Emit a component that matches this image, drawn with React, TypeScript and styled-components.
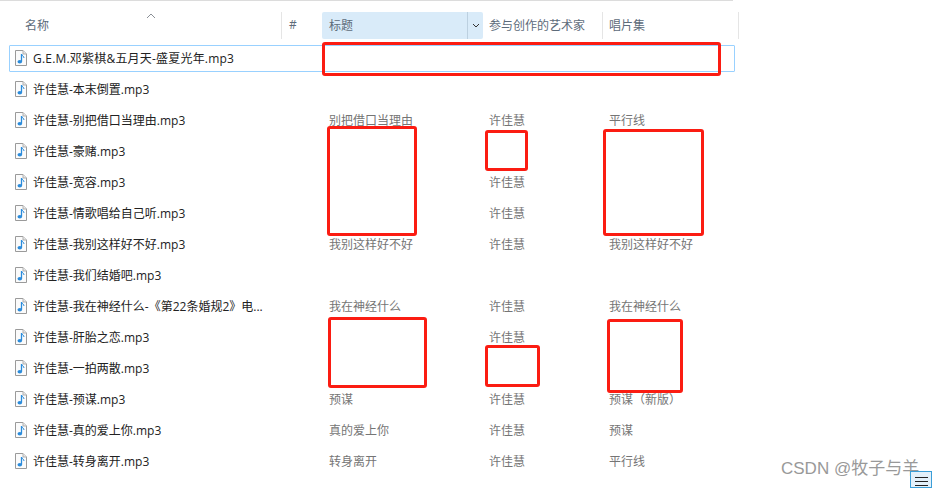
import React from 'react';
import styled, { createGlobalStyle } from 'styled-components';

const Global = createGlobalStyle`
  html, body { margin: 0; padding: 0; background: #fff; }
  body { width: 933px; height: 488px; overflow: hidden; font-family: "Open Sans", "Noto Sans CJK SC", sans-serif; }
`;

const columns = '282px 40px 161px 120px 136px';

const Page = styled.div`
  position: relative;
  width: 933px;
  height: 488px;
  overflow: hidden;
  background: #fff;
`;
const TopRule = styled.div`
  height: 1px;
  width: 733px;
  background: #dcdcdc;
`;
const Header = styled.div`
  display: grid;
  grid-template-columns: ${columns};
  height: 27px;
  margin-top: 11px;
`;
const HeadCell = styled.div<{ $pad: number; $sep?: boolean }>`
  position: relative;
  display: flex;
  align-items: center;
  padding-left: ${p => p.$pad}px;
  padding-bottom: 2px;
  font-size: 12px;
  color: #5d6b7a;
  border-right: ${p => (p.$sep ? '1px solid #e5e5e5' : '0')};
`;
const ActiveHead = styled.div`
  display: flex;
  background: #d9ebf9;
  border-radius: 2px;
  font-size: 12px;
  color: #5d6b7a;
`;
const ActiveLabel = styled.div`
  flex: 1;
  display: flex;
  align-items: center;
  padding-left: 7px;
  padding-bottom: 2px;
  border-right: 1px solid #bcd0e0;
`;
const ActiveChevron = styled.div`
  width: 15px;
  display: flex;
  align-items: center;
  justify-content: center;
`;
const SortCaret = styled.svg`
  position: absolute;
  left: 146px;
  top: 1px;
`;
const List = styled.div`
  margin-top: 3px;
  display: flex;
  flex-direction: column;
`;
const Row = styled.div`
  display: grid;
  grid-template-columns: ${columns};
  height: 31px;
  align-items: center;
  position: relative;
  font-size: 12px;
`;
const SelectedOutline = styled.div`
  position: absolute;
  left: 9px;
  top: 3px;
  width: 724px;
  height: 25px;
  border: 1px solid #99d1ff;
  border-radius: 1px;
`;
const NameCell = styled.div<{ $spaced?: boolean }>`
  display: flex;
  align-items: center;
  gap: 6px;
  padding-left: 15px;
  color: #222;
  white-space: nowrap;
  position: relative;
  letter-spacing: ${p => (p.$spaced ? '0.2px' : '0')};
`;
const Meta = styled.div`
  padding-left: 7px;
  color: #757575;
  white-space: nowrap;
`;
const ArtistMeta = styled(Meta)`
  padding-left: 6px;
`;
const Mark = styled.div<{ $x: number; $y: number; $w: number; $h: number }>`
  position: absolute;
  left: ${p => p.$x}px;
  top: ${p => p.$y}px;
  width: ${p => p.$w}px;
  height: ${p => p.$h}px;
  box-sizing: border-box;
  border: 3px solid #fb1c12;
  border-radius: 3px;
  background: ${p => (p.$w > 300 ? 'transparent' : '#fff')};
`;
const Watermark = styled.div`
  position: absolute;
  left: 781px;
  top: 459px;
  font-family: "Liberation Sans", "Noto Sans CJK SC", sans-serif;
  font-size: 17px;
  line-height: 20px;
  color: #999;
  white-space: nowrap;
`;
const Corner = styled.div`
  position: absolute;
  left: 910px;
  top: 471px;
  width: 22px;
  height: 17px;
  box-sizing: border-box;
  border: 1px solid #3b9ed8;
  background: #e3f0fa;
  display: flex;
  flex-direction: column;
  gap: 3px;
  align-items: center;
  padding-top: 5px;
`;
const CornerLine = styled.div`
  width: 13px;
  height: 1px;
  background: #222;
  flex: none;
`;

const FileIcon = () => (
  <svg width="12" height="16" viewBox="0 0 12 16" style={{ flex: 'none' }}>
    <path d="M.5.5h7.5l3.5 3.5v11.500h-11z" fill="#fbfbfb" stroke="#9a9a9a" />
    <path d="M8 .5v3.500h3.500" fill="#e8e8e8" stroke="#b0b0b0" />
    <path d="M6.500 4v7.500" stroke="#2a8bdb" strokeWidth="1.300" fill="none" />
    <path d="M6.500 4c.5 2 2.500 2 2.500 4" stroke="#2a8bdb" strokeWidth="1" fill="none" />
    <ellipse cx="4.800" cy="11.700" rx="2.300" ry="1.800" fill="#2a8bdb" />
  </svg>
);

const rows: [string, string, string, string][] = [
  ['G.E.M.邓紫棋&五月天-盛夏光年.mp3', '', '', ''],
  ['许佳慧-本末倒置.mp3', '', '', ''],
  ['许佳慧-别把借口当理由.mp3', '别把借口当理由', '许佳慧', '平行线'],
  ['许佳慧-豪赌.mp3', '', '', ''],
  ['许佳慧-宽容.mp3', '', '许佳慧', ''],
  ['许佳慧-情歌唱给自己听.mp3', '', '许佳慧', ''],
  ['许佳慧-我别这样好不好.mp3', '我别这样好不好', '许佳慧', '我别这样好不好'],
  ['许佳慧-我们结婚吧.mp3', '', '', ''],
  ['许佳慧-我在神经什么-《第22条婚规2》电...', '我在神经什么', '许佳慧', '我在神经什么'],
  ['许佳慧-肝胎之恋.mp3', '', '许佳慧', ''],
  ['许佳慧-一拍两散.mp3', '', '', ''],
  ['许佳慧-预谋.mp3', '预谋', '许佳慧', '预谋（新版）'],
  ['许佳慧-真的爱上你.mp3', '真的爱上你', '许佳慧', '预谋'],
  ['许佳慧-转身离开.mp3', '转身离开', '许佳慧', '平行线'],
];

const marks = [
  [322, 42, 399, 34],
  [327, 126, 90, 110],
  [485, 130, 43, 41],
  [603, 129, 101, 107],
  [328, 317, 99, 71],
  [485, 345, 55, 42],
  [607, 319, 76, 74],
];

export default function App() {
  return (
    <Page>
      <Global />
      <TopRule />
      <Header>
        <HeadCell $pad={25} $sep>
          名称
          <SortCaret width="10" height="6" viewBox="0 0 10 6">
            <path d="M1 5l4-4 4 4" fill="none" stroke="#8a8f96" strokeWidth="1" />
          </SortCaret>
        </HeadCell>
        <HeadCell $pad={7}>#</HeadCell>
        <ActiveHead>
          <ActiveLabel>标题</ActiveLabel>
          <ActiveChevron>
            <svg width="8" height="5" viewBox="0 0 8 5">
              <path d="M1 1l3 3 3-3" fill="none" stroke="#333" strokeWidth="1" />
            </svg>
          </ActiveChevron>
        </ActiveHead>
        <HeadCell $pad={6} $sep>参与创作的艺术家</HeadCell>
        <HeadCell $pad={6} $sep>唱片集</HeadCell>
      </Header>
      <List>
        {rows.map(([name, title, artist, album], i) => (
          <Row key={name}>
            {i === 0 && <SelectedOutline />}
            <NameCell $spaced={i === 0}>
              <FileIcon />
              {name}
            </NameCell>
            <div />
            <Meta>{title}</Meta>
            <ArtistMeta>{artist}</ArtistMeta>
            <ArtistMeta>{album}</ArtistMeta>
          </Row>
        ))}
      </List>
      {marks.map(([x, y, w, h]) => (
        <Mark key={`${x}-${y}`} $x={x} $y={y} $w={w} $h={h} />
      ))}
      <Watermark>CSDN @牧子与羊</Watermark>
      <Corner>
        <CornerLine />
        <CornerLine />
        <CornerLine />
      </Corner>
    </Page>
  );
}
